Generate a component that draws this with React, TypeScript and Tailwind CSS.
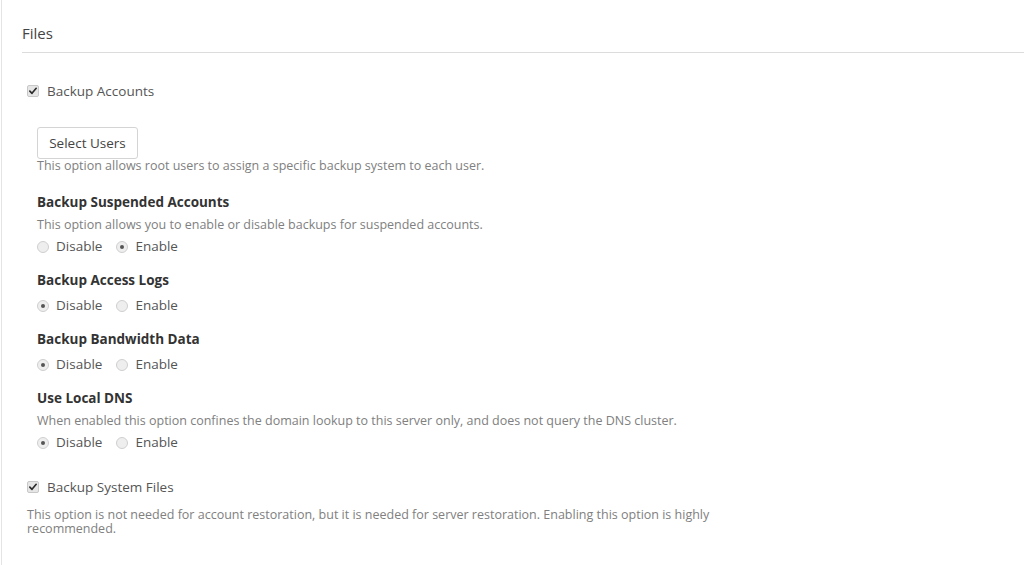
import React from 'react';

const font = { fontFamily: '"Open Sans", "Liberation Sans", sans-serif' };

const CheckBox = () => (
  <span className="inline-flex w-[12px] h-[12px] items-center justify-center rounded-[2px] border border-[#c8c8c8] bg-[#e6e6e6]">
    <svg viewBox="0 0 12 12" className="w-[10px] h-[10px]">
      <path d="M2.2 6.2 L4.8 8.8 L9.8 2.8" fill="none" stroke="#2b2b2b" strokeWidth="2" strokeLinecap="round" strokeLinejoin="round" />
    </svg>
  </span>
);

const Radio = ({ checked }: { checked: boolean }) => (
  <span className="inline-flex w-[12px] h-[12px] items-center justify-center rounded-full border border-[#cfcfcf] bg-[#eeeeee]">
    {checked && <span className="w-[4px] h-[4px] rounded-full bg-[#555]" />}
  </span>
);

const RadioPair = ({ value }: { value: 'disable' | 'enable' }) => (
  <div className="flex items-center h-[25px] text-[13.5px] text-[#555]">
    <label className="flex items-center gap-[7px]">
      <Radio checked={value === 'disable'} />
      <span>Disable</span>
    </label>
    <label className="flex items-center gap-[7px] ml-[14px]">
      <Radio checked={value === 'enable'} />
      <span>Enable</span>
    </label>
  </div>
);

interface OptionProps {
  title: string;
  desc?: string;
  value: 'disable' | 'enable';
}

const Option = ({ title, desc, value }: OptionProps) => (
  <div className="flex flex-col">
    <div className="h-[25px] leading-[25px] text-[13.5px] font-bold text-[#333]">{title}</div>
    {desc && <div className="h-[19px] leading-[19px] text-[12.5px] text-[#808080]">{desc}</div>}
    <RadioPair value={value} />
  </div>
);

export default function App() {
  return (
    <div className="w-[1024px] h-[565px] bg-white overflow-hidden border-l border-[#e4e4e4] ml-[1px]" style={font}>
      <div className="pl-[20px] pt-[22px]">
        <div className="text-[15px] text-[#444] h-[22px] leading-[22px]">Files</div>
        <div className="mt-[8px] border-b border-[#dcdcdc]" />

        <div className="mt-[28px] ml-[5px] flex items-center gap-[8px] h-[20px] text-[13.5px] text-[#555]">
          <CheckBox />
          <span>Backup Accounts</span>
        </div>

        <div className="ml-[15px] mt-[26px] flex flex-col">
          <button className="w-[101px] h-[32px] rounded-[3px] border border-[#d4d4d4] bg-white text-[13.5px] text-[#444]">
            Select Users
          </button>
          <div className="h-[14px] leading-[14px] text-[12.5px] text-[#808080]">
            This option allows root users to assign a specific backup system to each user.
          </div>

          <div className="mt-[17px] flex flex-col gap-[9px]">
            <Option
              title="Backup Suspended Accounts"
              desc="This option allows you to enable or disable backups for suspended accounts."
              value="enable"
            />
            <Option title="Backup Access Logs" value="disable" />
            <Option title="Backup Bandwidth Data" value="disable" />
            <Option
              title="Use Local DNS"
              desc="When enabled this option confines the domain lookup to this server only, and does not query the DNS cluster."
              value="disable"
            />
          </div>
        </div>

        <div className="mt-[22px] ml-[5px] flex items-center gap-[8px] h-[20px] text-[13.5px] text-[#555]">
          <CheckBox />
          <span>Backup System Files</span>
        </div>
        <div className="ml-[5px] mt-[11px] w-[700px] text-[12.5px] leading-[14px] text-[#808080]">
          This option is not needed for account restoration, but it is needed for server restoration. Enabling this option is highly recommended.
        </div>
      </div>
    </div>
  );
}
